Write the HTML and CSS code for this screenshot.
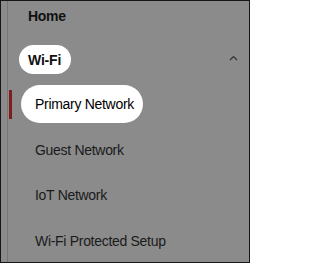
FILE: index.html
```html
<!DOCTYPE html>
<html>
<head>
<meta charset="utf-8">
<link rel="stylesheet" href="styles.css">
</head>
<body>
<div class="frame">
  <div class="rail"></div>
  <nav class="nav">
    <div class="home">Home</div>
    <div class="section">
      <span class="section-pill">Wi-Fi</span>
      <svg class="chevron" width="9" height="6" viewBox="0 0 9 6"><polyline points="1,5 4.5,1.5 8,5" fill="none" stroke="#333" stroke-width="1.2"/></svg>
    </div>
    <ul class="sub">
      <li class="sub-item active"><span class="marker"></span><span class="sub-pill">Primary Network</span></li>
      <li class="sub-item"><span class="sub-label">Guest Network</span></li>
      <li class="sub-item"><span class="sub-label">IoT Network</span></li>
      <li class="sub-item"><span class="sub-label">Wi-Fi Protected Setup</span></li>
    </ul>
  </nav>
</div>
</body>
</html>
```

FILE: styles.css
```css
* { box-sizing: border-box; }
html, body { margin: 0; padding: 0; }
body {
  font-family: "Liberation Sans", Arial, sans-serif;
  color: #151515;
}
.frame {
  width: 250px;
  height: 263px;
  border: 1px solid #161616;
  background: #8b8b8b;
  display: flex;
  overflow: hidden;
}
.rail {
  width: 1px;
  margin-left: 6px;
  background: #767676;
  flex: none;
}
.nav {
  flex: 1;
  display: flex;
  flex-direction: column;
}
.home {
  height: 29px;
  display: flex;
  align-items: center;
  padding-left: 20px;
  font-weight: bold;
  font-size: 14px;
  letter-spacing: -0.3px;
  color: #111;
}
.section {
  margin-top: 15px;
  height: 29px;
  display: flex;
  align-items: center;
  justify-content: space-between;
  padding-right: 11px;
}
.section-pill {
  margin-left: 11px;
  height: 29px;
  padding: 0 10px 0 9px;
  display: flex;
  align-items: center;
  background: #fff;
  border-radius: 15px;
  font-weight: bold;
  font-size: 14px;
  letter-spacing: -0.2px;
  color: #111;
}
.chevron { display: block; margin-top: -3px; }
.sub {
  list-style: none;
  margin: 11px 0 0;
  padding: 0;
  display: flex;
  flex-direction: column;
  gap: 7.5px;
}
.sub-item {
  height: 38px;
  display: flex;
  align-items: center;
  font-size: 14px;
  letter-spacing: -0.3px;
}
.marker {
  width: 3px;
  height: 29px;
  margin-left: 1px;
  background: #7d1d1c;
  flex: none;
}
.sub-pill {
  margin-left: 9px;
  height: 38px;
  padding: 0 9px 0 14px;
  display: flex;
  align-items: center;
  background: #fff;
  border-radius: 19px;
  color: #000;
}
.sub-label {
  padding-left: 27px;
  color: #1a1a1a;
}
```
